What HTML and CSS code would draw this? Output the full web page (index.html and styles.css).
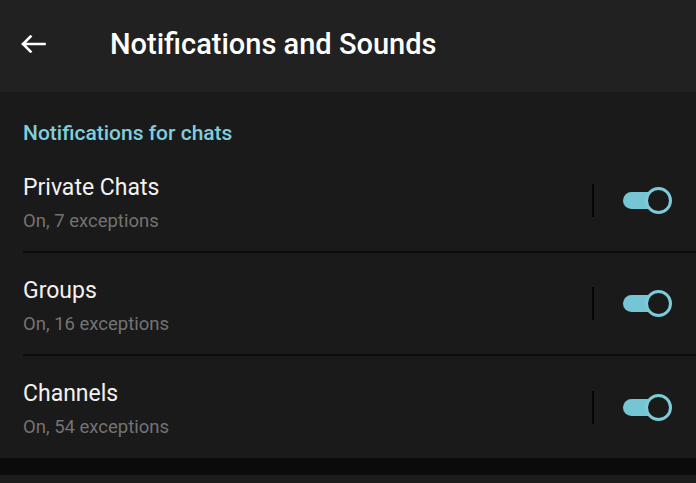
FILE: index.html
```html
<!DOCTYPE html>
<html>
<head>
<meta charset="utf-8">
<link rel="stylesheet" href="styles.css">
</head>
<body>
<header class="topbar">
  <svg class="back" width="26" height="18" viewBox="0 0 26 18"><path d="M24.5 9H3M10.5 1.5L3 9l7.5 7.5" fill="none" stroke="#fff" stroke-width="2.6" stroke-linecap="square"/></svg>
  <h1 class="title">Notifications and Sounds</h1>
</header>
<section class="section">
  <div class="section-title">Notifications for chats</div>
  <div class="row">
    <div class="texts">
      <div class="row-title">Private Chats</div>
      <div class="row-sub">On, 7 exceptions</div>
    </div>
    <div class="sep"></div>
    <div class="toggle"><span class="knob"></span></div>
  </div>
  <div class="row">
    <div class="texts">
      <div class="row-title">Groups</div>
      <div class="row-sub">On, 16 exceptions</div>
    </div>
    <div class="sep"></div>
    <div class="toggle"><span class="knob"></span></div>
  </div>
  <div class="row last">
    <div class="texts">
      <div class="row-title">Channels</div>
      <div class="row-sub">On, 54 exceptions</div>
    </div>
    <div class="sep"></div>
    <div class="toggle"><span class="knob"></span></div>
  </div>
</section>
<div class="band"></div>
<div class="rest"></div>
</body>
</html>
```
FILE: styles.css
```css
* { box-sizing: border-box; }
html, body { margin: 0; padding: 0; }
body {
  width: 696px;
  height: 483px;
  overflow: hidden;
  background: #1c1c1c;
  font-family: Roboto, "Liberation Sans", sans-serif;
}
.topbar {
  height: 92px;
  background: #212121;
  display: flex;
  align-items: center;
  padding-left: 20px;
}
.back { display: block; margin-top: -4px; }
.title {
  margin: -4px 0 0 64px;
  font-size: 29px;
  font-weight: 500;
  color: #fff;
  line-height: 32px;
}
.section {
  background: #1a1a1a;
  padding-top: 28px;
}
.section-title {
  padding-left: 23px;
  font-size: 21px;
  font-weight: 500;
  color: #80cedc;
  line-height: 26px;
  margin-bottom: 4px;
}
.row {
  height: 103px;
  margin-left: 23px;
  display: flex;
  align-items: center;
  border-bottom: 2px solid #0c0c0c;
  padding-right: 24px;
}
.row.last { border-bottom: none; height: 102px; }
.texts { flex: 1; margin-top: 5px; }
.row-title {
  font-size: 23px;
  color: #f2f2f2;
  line-height: 28px;
}
.row-sub {
  margin-top: 7px;
  font-size: 18.5px;
  color: #737373;
  line-height: 24px;
}
.sep {
  width: 2px;
  height: 33px;
  background: #050505;
  margin-right: 29px;
}
.toggle {
  position: relative;
  width: 49px;
  height: 27px;
}
.toggle::before {
  content: "";
  position: absolute;
  left: 0;
  top: 5px;
  width: 40px;
  height: 17px;
  border-radius: 9px;
  background: #75c5d4;
}
.knob {
  position: absolute;
  right: 0;
  top: 0;
  width: 27px;
  height: 27px;
  border-radius: 50%;
  border: 3px solid #7ccbd9;
  background: #1a1a1a;
}
.band {
  height: 17px;
  background: #0b0b0b;
}
.rest {
  height: 20px;
  background: #1c1c1c;
}
```
